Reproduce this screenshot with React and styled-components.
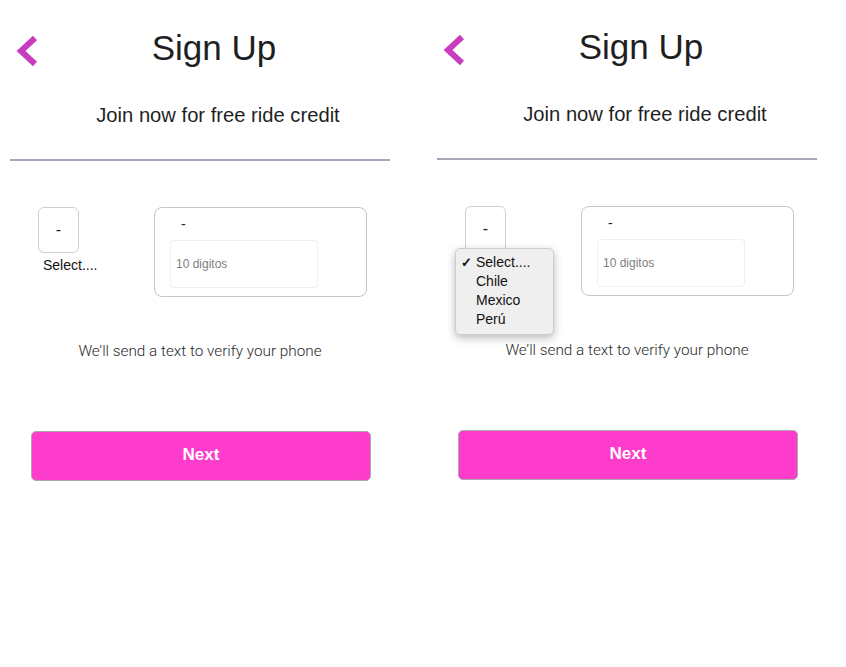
import React from "react";
import styled, { createGlobalStyle } from "styled-components";

const Global = createGlobalStyle`
  html, body { margin: 0; padding: 0; background: #ffffff; }
  body { font-family: "Liberation Sans", Arial, sans-serif; color: #222222; }
`;

const Page = styled.div`
  display: flex;
  align-items: flex-start;
  gap: 47px;
  padding-left: 10px;
`;

const Panel = styled.section`
  width: 380px;
  display: flex;
  flex-direction: column;
  margin-top: ${(p) => (p.$raise ? "-1px" : "0")};
`;

const Header = styled.header`
  display: flex;
  align-items: center;
  height: 40px;
  margin-top: 28px;
`;

const Back = styled.button`
  width: 28px;
  height: 40px;
  padding: 0 0 0 6px;
  margin: 5px 0 0 0;
  border: 0;
  background: transparent;
  display: flex;
  align-items: center;
  cursor: pointer;
`;

const Title = styled.h1`
  flex: 1;
  margin: 0;
  text-align: center;
  font-size: 35px;
  line-height: 40px;
  font-weight: 400;
  color: #1f1f1f;
`;

const Subtitle = styled.p`
  margin: 35px 0 0 0;
  padding-left: 36px;
  text-align: center;
  font-size: 20.2px;
  line-height: 24px;
  color: #1f1f1f;
`;

const Divider = styled.hr`
  margin: 32px 0 0 0;
  height: 2px;
  border: 0;
  background: #aaa6b9;
`;

const Row = styled.div`
  display: flex;
  align-items: flex-start;
  margin-top: 46px;
  padding-left: 28px;
`;

const SelectCol = styled.div`
  position: relative;
  width: 116px;
  display: flex;
  flex-direction: column;
`;

const SelectBox = styled.div`
  width: 39px;
  height: 44px;
  border: 1px solid #cfcfcf;
  border-radius: 6px;
  display: flex;
  align-items: center;
  justify-content: center;
  font-size: 16px;
  color: #222;
`;

const SelectLabel = styled.div`
  margin: 4px 0 0 5px;
  font-size: 14px;
  line-height: 16px;
  color: #111;
  visibility: ${(p) => (p.$covered ? "hidden" : "visible")};
`;

const Menu = styled.ul`
  position: absolute;
  left: -10px;
  top: 42px;
  z-index: 2;
  width: 97px;
  margin: 0;
  padding: 4px 0 5px 0;
  list-style: none;
  background: #efefef;
  border: 1px solid #cdcdcd;
  border-radius: 5px;
  box-shadow: 0 3px 8px rgba(0, 0, 0, 0.28);
`;

const MenuItem = styled.li`
  display: flex;
  align-items: center;
  height: 19px;
  font-size: 14px;
  line-height: 19px;
  color: #111;
`;

const Check = styled.span`
  width: 20px;
  padding-left: 5px;
  box-sizing: border-box;
  font-size: 13px;
  line-height: 19px;
  font-weight: 700;
  flex: none;
`;

const PhoneBox = styled.div`
  border: 1px solid #c6c6c6;
  border-radius: 8px;
  padding: 8px 0 0 15px;
  box-sizing: content-box;
  display: flex;
  flex-direction: column;
  width: 196px;
  height: 80px;
`;

const PhoneDash = styled.div`
  margin-left: 11px;
  font-size: 14px;
  line-height: 16px;
  color: #222;
`;

const PhoneInput = styled.div`
  margin-top: 8px;
  width: 141px;
  height: 46px;
  border: 1px solid #f0f0f0;
  border-radius: 4px;
  display: flex;
  align-items: center;
  padding-left: 5px;
  font-size: 12px;
  color: #808080;
`;

const Hint = styled.p`
  margin: 45px 0 0 0;
  text-align: center;
  font-family: Roboto, "Liberation Sans", sans-serif;
  font-weight: 300;
  font-size: 15.3px;
  line-height: 18px;
  color: #2a2a2a;
`;

const NextButton = styled.button`
  margin: 71px 0 0 21px;
  width: 340px;
  height: 50px;
  padding: 0 0 3px 0;
  background: #fd3ccb;
  border: 1px solid #a9a9a9;
  border-radius: 5px;
  color: #ffffff;
  font-family: "Liberation Sans", Arial, sans-serif;
  font-weight: 700;
  font-size: 17px;
  cursor: pointer;
`;

const Chevron = () => (
  <svg width="22" height="32" viewBox="0 0 22 32" aria-hidden="true">
    <polyline
      points="19,3 5,16 19,29"
      fill="none"
      stroke="#c83cc0"
      strokeWidth="6"
      strokeLinejoin="miter"
      strokeLinecap="butt"
    />
  </svg>
);

const countries = ["Select....", "Chile", "Mexico", "Perú"];

const SignUp = ({ open, raise }) => (
  <Panel $raise={raise}>
    <Header>
      <Back aria-label="Back">
        <Chevron />
      </Back>
      <Title>Sign Up</Title>
    </Header>
    <Subtitle>Join now for free ride credit</Subtitle>
    <Divider />
    <Row>
      <SelectCol>
        <SelectBox>-</SelectBox>
        <SelectLabel $covered={open}>Select....</SelectLabel>
        {open && (
          <Menu>
            {countries.map((c, i) => (
              <MenuItem key={c}>
                <Check>{i === 0 ? "✓" : ""}</Check>
                {c}
              </MenuItem>
            ))}
          </Menu>
        )}
      </SelectCol>
      <PhoneBox>
        <PhoneDash>-</PhoneDash>
        <PhoneInput>10 digitos</PhoneInput>
      </PhoneBox>
    </Row>
    <Hint>We’ll send a text to verify your phone</Hint>
    <NextButton>Next</NextButton>
  </Panel>
);

export default function App() {
  return (
    <>
      <Global />
      <Page>
        <SignUp />
        <SignUp open raise />
      </Page>
    </>
  );
}
